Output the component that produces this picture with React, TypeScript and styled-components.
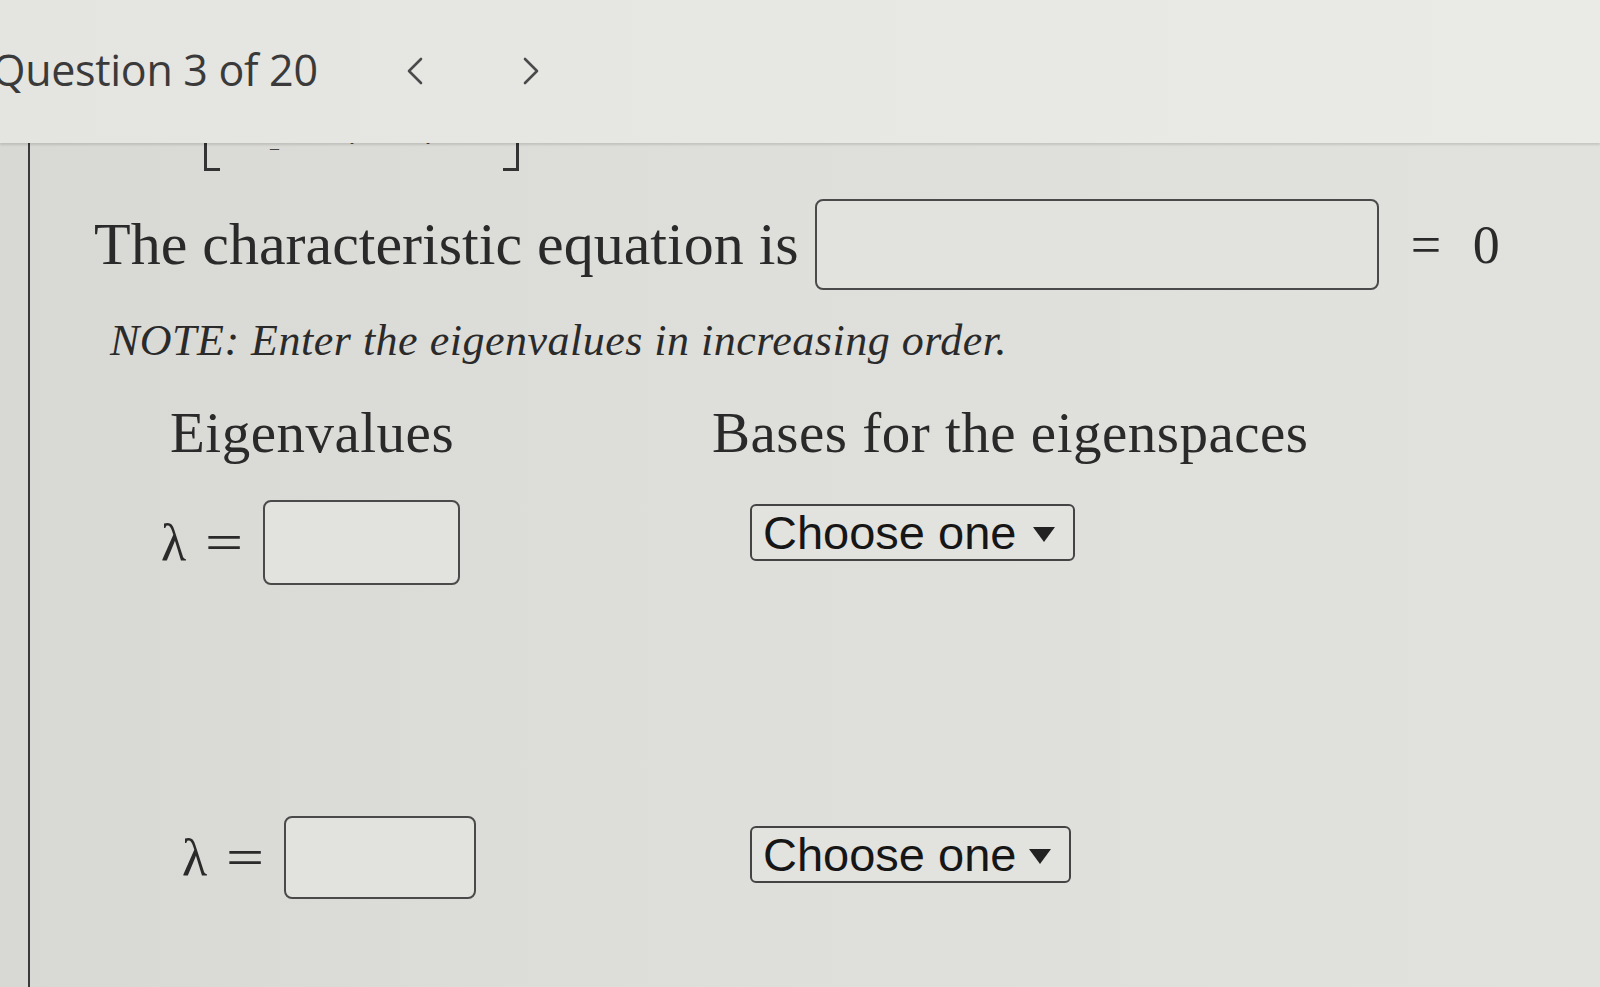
import styled, { createGlobalStyle } from "styled-components";

const Global = createGlobalStyle`
    html, body {
        margin: 0;
        padding: 0;
        background: #dcdcd8;
        overflow: hidden;
    }
    body {
        width: 1600px;
        height: 987px;
        font-family: "Liberation Serif", "DejaVu Serif", serif;
        color: #2a2a2a;
    }
`;

const Page = styled.div`
    width: 1600px;
    height: 987px;
    display: flex;
    flex-direction: column;
    overflow: hidden;
    background: linear-gradient(90deg, #d8d8d4 0%, #dededa 45%, #e1e1dd 100%);
`;

const Header = styled.header`
    height: 143px;
    flex: none;
    display: flex;
    align-items: center;
    padding: 0 0 5px 0;
    box-sizing: border-box;
    background: linear-gradient(90deg, #e4e4e1 0%, #eaeae7 100%);
    box-shadow: 0 2px 2px rgba(0, 0, 0, 0.12);
    position: relative;
    z-index: 1;
`;

const QuestionLabel = styled.h1`
    margin: 0 0 0 -8px;
    font-family: "Open Sans", "Noto Sans", sans-serif;
    font-weight: 400;
    font-size: 43px;
    color: #3a3a3a;
    letter-spacing: -0.3px;
`;

const NavGroup = styled.nav`
    display: flex;
    gap: 90px;
    margin-left: 84px;
    padding-top: 4px;
`;

const NavButton = styled.button`
    border: 0;
    background: none;
    padding: 0;
    width: 26px;
    height: 34px;
    display: flex;
    align-items: center;
    justify-content: center;
    color: #4a4a4a;
`;

const Panel = styled.main`
    flex: 1;
    min-height: 0;
    margin-left: 28px;
    border-left: 2px solid #3a3a3a;
    display: flex;
    flex-direction: column;
    padding-left: 64px;
`;

const MatrixTail = styled.div`
    height: 28px;
    display: flex;
    align-items: flex-start;
    padding-left: 110px;
`;

const BracketCorner = styled.span<{ $side: "left" | "right" }>`
    display: block;
    width: 16px;
    height: 28px;
    border-bottom: 3px solid #333;
    ${(p) => (p.$side === "left" ? "border-left: 3px solid #333;" : "border-right: 3px solid #333;")}
    box-sizing: border-box;
`;

const MatrixMarks = styled.span`
    width: 283px;
    display: flex;
    gap: 70px;
    padding-left: 50px;
    box-sizing: border-box;
    font-size: 18px;
    line-height: 10px;
    color: #444;
`;

const EquationRow = styled.div`
    display: flex;
    align-items: center;
    margin-top: 28px;
    height: 91px;
`;

const EquationText = styled.span`
    font-size: 60px;
    margin-right: 16px;
`;

const AnswerBox = styled.div<{ $w: number; $h: number }>`
    width: ${(p) => p.$w}px;
    height: ${(p) => p.$h}px;
    border: 2px solid #4a4a4a;
    border-radius: 8px;
    background: #e2e2df;
    box-sizing: border-box;
    flex: none;
`;

const EqualsZero = styled.span`
    font-size: 54px;
    margin-left: 32px;
    word-spacing: 18px;
`;

const Note = styled.p`
    margin: 25px 0 0 16px;
    font-style: italic;
    font-size: 44px;
    letter-spacing: 0.5px;
`;

const Grid = styled.section`
    display: grid;
    grid-template-columns: 551px 1fr;
    grid-template-rows: 80px 125px 1fr;
    margin-left: 67px;
    margin-top: 34px;
`;

const ColumnHead = styled.h2<{ $indent: number }>`
    margin: 0 0 0 ${(p) => p.$indent}px;
    font-weight: 400;
    font-size: 57px;
    line-height: 1.15;
    letter-spacing: 0.5px;
`;

const LambdaCell = styled.div<{ $top: number; $indent: number }>`
    display: flex;
    align-items: center;
    align-self: start;
    padding: ${(p) => p.$top}px 0 0 ${(p) => p.$indent}px;
`;

const Lambda = styled.span`
    font-size: 52px;
    margin-right: 28px;
    word-spacing: 6px;
`;

const Equals = styled.span`
    display: inline-block;
    transform: scaleX(1.3);
    transform-origin: left center;
`;

const SelectCell = styled.div<{ $top: number }>`
    align-self: start;
    padding: ${(p) => p.$top}px 0 0 38px;
`;

const ChooseOne = styled.button<{ $w: number }>`
    width: ${(p) => p.$w}px;
    height: 57px;
    display: flex;
    align-items: center;
    justify-content: space-between;
    padding: 0 18px 0 11px;
    border: 2px solid #444;
    border-radius: 6px;
    background: #e2e2df;
    font-family: "Liberation Sans", Arial, sans-serif;
    font-size: 47px;
    color: #161616;
    box-sizing: border-box;
`;

const Caret = styled.span`
    width: 0;
    height: 0;
    border-left: 11px solid transparent;
    border-right: 11px solid transparent;
    border-top: 15px solid #222;
    margin-top: 4px;
`;

const Chevron = ({ dir }: { dir: "left" | "right" }) => (
    <svg width="18" height="30" viewBox="0 0 18 30">
        <polyline
            points={dir === "left" ? "15,3 3,15 15,27" : "3,3 15,15 3,27"}
            fill="none"
            stroke="currentColor"
            strokeWidth="2.6"
            strokeLinecap="round"
            strokeLinejoin="round"
        />
    </svg>
);

const LambdaEquals = () => (
    <Lambda>
        λ <Equals>=</Equals>
    </Lambda>
);

export default function App() {
    return (
        <>
            <Global />
            <Page>
                <Header>
                    <QuestionLabel>Question 3 of 20</QuestionLabel>
                    <NavGroup>
                        <NavButton aria-label="Previous question">
                            <Chevron dir="left" />
                        </NavButton>
                        <NavButton aria-label="Next question">
                            <Chevron dir="right" />
                        </NavButton>
                    </NavGroup>
                </Header>
                <Panel>
                    <MatrixTail>
                        <BracketCorner $side="left" />
                        <MatrixMarks>
                            <span>–</span>
                            <span>ˇ</span>
                            <span>ˇ</span>
                        </MatrixMarks>
                        <BracketCorner $side="right" />
                    </MatrixTail>
                    <EquationRow>
                        <EquationText>The characteristic equation is</EquationText>
                        <AnswerBox $w={564} $h={91} />
                        <EqualsZero>= 0</EqualsZero>
                    </EquationRow>
                    <Note>NOTE: Enter the eigenvalues in increasing order.</Note>
                    <Grid>
                        <ColumnHead $indent={9}>Eigenvalues</ColumnHead>
                        <ColumnHead $indent={0}>Bases for the eigenspaces</ColumnHead>
                        <LambdaCell $top={20} $indent={0}>
                            <LambdaEquals />
                            <AnswerBox $w={197} $h={85} />
                        </LambdaCell>
                        <SelectCell $top={24}>
                            <ChooseOne $w={325}>
                                Choose one
                                <Caret />
                            </ChooseOne>
                        </SelectCell>
                        <LambdaCell $top={211} $indent={21}>
                            <LambdaEquals />
                            <AnswerBox $w={192} $h={83} />
                        </LambdaCell>
                        <SelectCell $top={221}>
                            <ChooseOne $w={321}>
                                Choose one
                                <Caret />
                            </ChooseOne>
                        </SelectCell>
                    </Grid>
                </Panel>
            </Page>
        </>
    );
}
